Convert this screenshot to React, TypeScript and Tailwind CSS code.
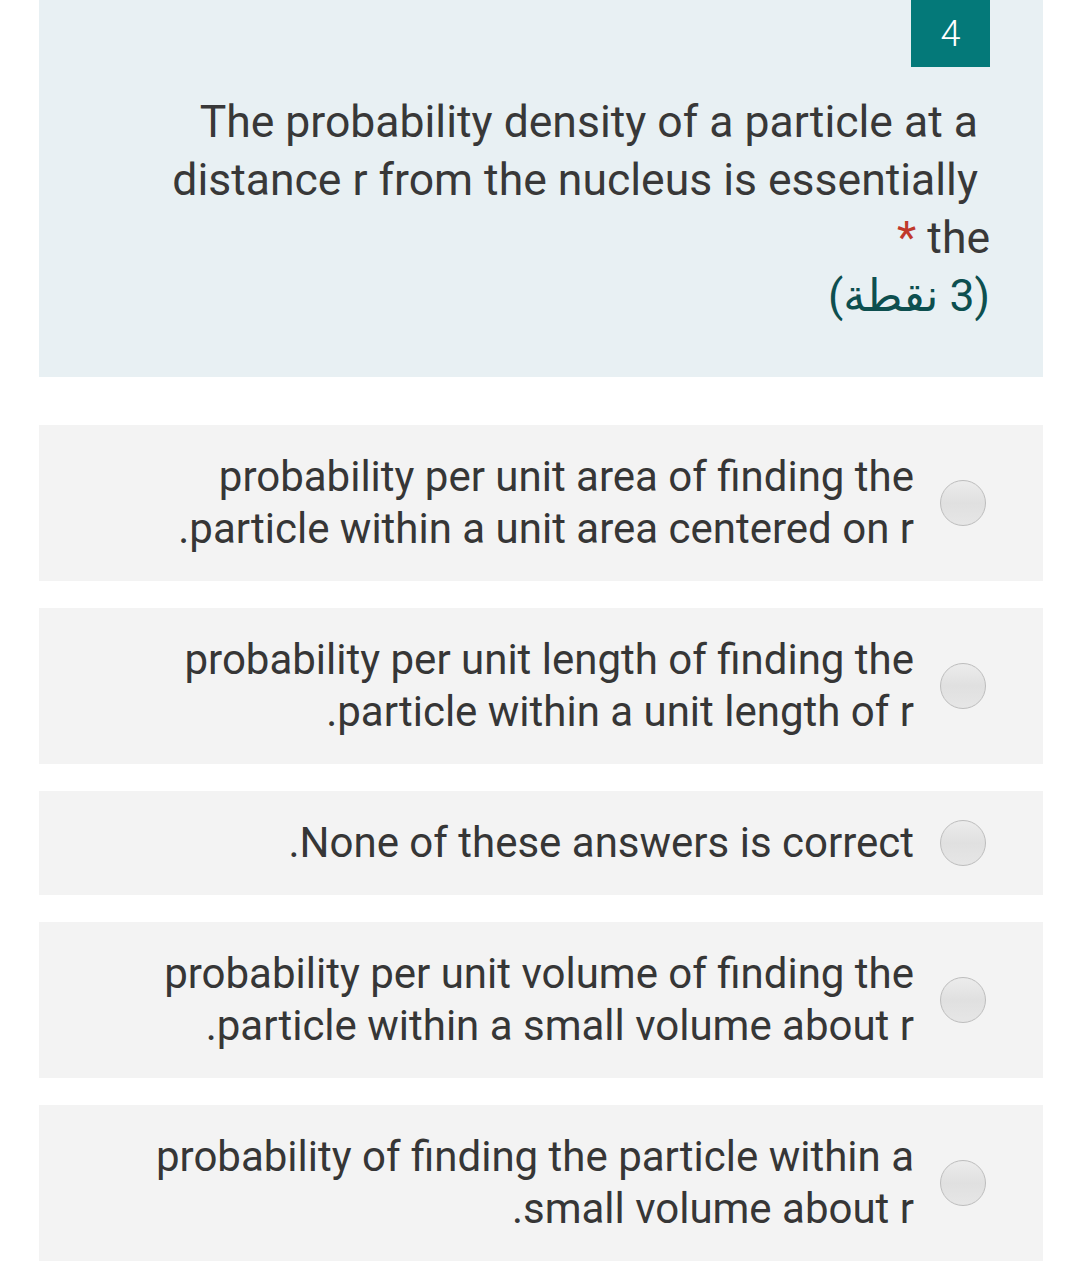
const options = [
  ["probability per unit area of finding the", "particle within a unit area centered on r."],
  ["probability per unit length of finding the", "particle within a unit length of r."],
  ["None of these answers is correct."],
  ["probability per unit volume of finding the", "particle within a small volume about r."],
  ["probability of finding the particle within a", "small volume about r."],
];

function Radio() {
  return (
    <div className="w-[46px] h-[46px] shrink-0 rounded-full border-[1.5px] border-[#bdbdbd] bg-gradient-to-b from-[#ececec] via-[#e0e0e0] to-[#e6e6e6]" />
  );
}

function Option({ lines }: { lines: string[] }) {
  return (
    <div className="bg-[#f3f3f3] flex items-center justify-end gap-[26px] pr-[57px] pl-8 py-[26px]">
      <div dir="rtl" className="text-right text-[42px] leading-[52px] text-[#363636]">
        {lines.map((l) => (
          <div key={l}>{l}</div>
        ))}
      </div>
      <Radio />
    </div>
  );
}

export default function App() {
  return (
    <div
      className="min-h-screen bg-white pl-[39px] pr-[37px] pb-10"
      style={{ fontFamily: "Roboto, 'DejaVu Sans', sans-serif" }}
    >
      <div className="bg-[#e8f0f3] pr-[53px] pl-10 pb-[52px]">
        <div className="flex justify-end">
          <div className="w-[79px] h-[67px] bg-[#047979] text-white text-[36px] font-light flex items-center justify-center">
            4
          </div>
        </div>
        <div dir="rtl" className="mt-[26px] text-right text-[44.5px] leading-[58px] text-[#383838]">
          <div className="pr-[12px]">The probability density of a particle at a</div>
          <div className="pr-[12px]">distance r from the nucleus is essentially</div>
          <div>
            the <span className="text-[#c0392b]">*</span>
          </div>
          <div className="text-[#0d4f4f]">(3 نقطة)</div>
        </div>
      </div>
      <div className="mt-12 flex flex-col gap-[27px]">
        {options.map((o, i) => (
          <Option key={i} lines={o} />
        ))}
      </div>
    </div>
  );
}
